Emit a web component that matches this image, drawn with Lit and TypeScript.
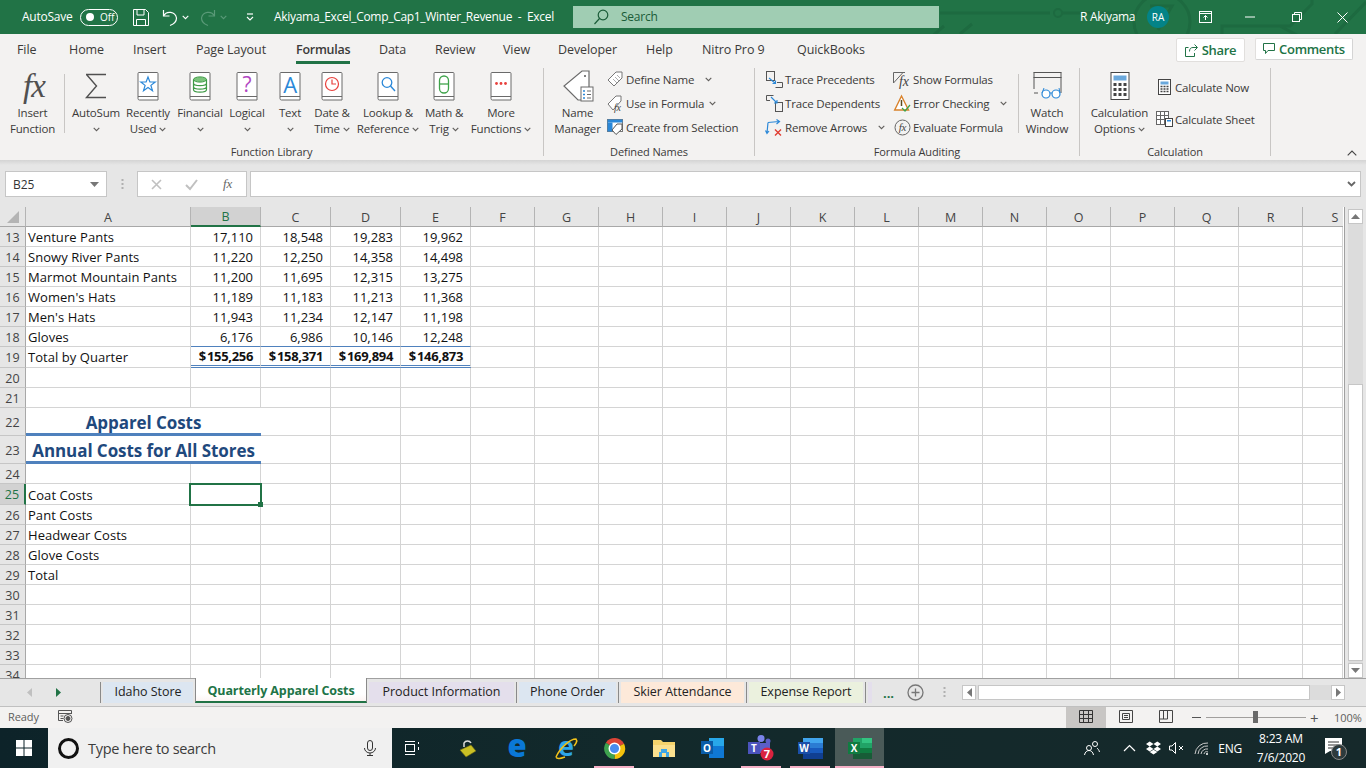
import { LitElement, html, css, svg } from "lit";
import { customElement } from "lit/decorators.js";

const chev = (c = "#605e5c") => html`<svg class="chev" width="7" height="5" viewBox="0 0 7 5"><path d="M.7 .8L3.5 3.6L6.3 .8" fill="none" stroke="${c}" stroke-width="1.1"/></svg>`;

const book = (inner: any) => html`<svg width="22" height="29" viewBox="0 0 22 29">
  <path d="M2 .5H20a1 1 0 0 1 1 1V28H2.5A1.5 1.5 0 0 1 1 26.5V1.5a1 1 0 0 1 1-1Z" fill="#fff" stroke="#6a6a6a"/>
  <path d="M1 24.5H21" stroke="#6a6a6a"/>${inner}</svg>`;

const I: Record<string, any> = {
  fx: html`<span class="fxbig">fx</span>`,
  sum: html`<svg width="22" height="26" viewBox="0 0 22 26"><path d="M1 1.5H21M1.5 1.5L11.5 13L1.5 24.5H21" fill="none" stroke="#505050" stroke-width="1.4"/></svg>`,
  star: book(svg`<path d="M11 5l1.9 5h5.3l-4.3 3.4 1.6 5.3L11 15.6l-4.5 3.1 1.6-5.3L3.8 10h5.3Z" fill="none" stroke="#2b88d8" stroke-width="1.2"/>`),
  fin: book(svg`<ellipse cx="11" cy="7.5" rx="6.5" ry="2.6" fill="#7cc47c" stroke="#3e9a46"/><path d="M4.5 7.5v10c0 1.5 3 2.6 6.5 2.6s6.5-1.1 6.5-2.6v-10M4.5 11c0 1.5 3 2.6 6.5 2.6s6.5-1.1 6.5-2.6M4.5 14.5c0 1.5 3 2.6 6.5 2.6s6.5-1.1 6.5-2.6" fill="none" stroke="#3e9a46" stroke-width="1.2"/>`),
  log: book(svg`<text x="11" y="20" font-family="Open Sans" font-size="21" fill="#b146c2" text-anchor="middle">?</text>`),
  txt: book(svg`<text x="11" y="21" font-family="Open Sans" font-size="22" fill="#2b88d8" text-anchor="middle">A</text>`),
  clk: book(svg`<circle cx="11" cy="12" r="6.5" fill="none" stroke="#e8403c" stroke-width="1.2"/><path d="M11 7.5V12H15" fill="none" stroke="#e8403c" stroke-width="1.2"/>`),
  lku: book(svg`<circle cx="10" cy="10.5" r="4.8" fill="none" stroke="#2b88d8" stroke-width="1.3"/><path d="M13.5 14l4.5 5" stroke="#2b88d8" stroke-width="1.4"/>`),
  math: book(svg`<rect x="6.5" y="4" width="9" height="17" rx="4.5" fill="none" stroke="#3ea34a" stroke-width="1.3"/><path d="M6.5 12H15.5" stroke="#3ea34a" stroke-width="1.3"/>`),
  more: book(svg`<circle cx="6.5" cy="11.5" r="1.4" fill="#e8403c"/><circle cx="11" cy="11.5" r="1.4" fill="#e8403c"/><circle cx="15.5" cy="11.5" r="1.4" fill="#e8403c"/>`),
  name: html`<svg width="32" height="32" viewBox="0 0 32 32"><path d="M20 1H27V23L19 30H16L2 16Z" fill="#fff" stroke="#6a6a6a" stroke-width="1.2"/><circle cx="23" cy="6" r="1" fill="#555"/><rect x="19" y="17" width="12" height="14" fill="#fff" stroke="#6a6a6a"/><path d="M21 21h2M21 24.5h2M21 28h2" stroke="#2b88d8" stroke-width="1.6"/><path d="M25 21h4M25 24.5h4M25 28h4" stroke="#6a6a6a"/></svg>`,
  def: html`<svg width="16" height="16" viewBox="0 0 16 16"><path d="M9 1H15V7L7 15L1 9Z" fill="#fff" stroke="#777"/><path d="M6 8l4 4M8 6l4 4M10 4l3 3" stroke="#999" stroke-width=".8"/></svg>`,
  use: html`<svg width="17" height="17" viewBox="0 0 17 17"><path d="M9 1H14V6L6 15L1 9Z" fill="#fff" stroke="#777"/><text x="7" y="16" font-family="Liberation Serif" font-style="italic" font-size="10" fill="#444">fx</text></svg>`,
  cre: html`<svg width="17" height="16" viewBox="0 0 17 16"><rect x=".5" y=".5" width="15" height="12" fill="#fff" stroke="#777"/><rect x=".5" y=".5" width="15" height="3" fill="#2b88d8"/><rect x=".5" y="3.5" width="5" height="9" fill="#2b88d8"/><path d="M10 5H15V10L9 15.5L5 11Z" fill="#fff" stroke="#555"/></svg>`,
  prec: html`<svg width="17" height="17" viewBox="0 0 17 17"><rect x=".5" y=".5" width="8" height="9" fill="none" stroke="#555"/><path d="M11 11.500H16.500V16.500H9.500" fill="none" stroke="#555"/><path d="M3 7L9.500 12.500M9.500 9.500V12.500H6.500" fill="none" stroke="#2b88d8" stroke-width="1.100"/></svg>`,
  dep: html`<svg width="17" height="17" viewBox="0 0 17 17"><path d="M7.500 .5H.5V5.500H4" fill="none" stroke="#555"/><rect x="9.500" y="7.500" width="7" height="9" fill="none" stroke="#555"/><path d="M5 2L11 8M11 5V8H8" fill="none" stroke="#2b88d8" stroke-width="1.100"/></svg>`,
  rem: html`<svg width="18" height="17" viewBox="0 0 18 17"><path d="M3 3.500L2 14M.5 11.500L2 14.500L4 12M3 3.500L14 2.500M11.500 .5L14.500 2.500L11.500 5" fill="none" stroke="#2b88d8" stroke-width="1.200"/><path d="M10 10.500L16 16.500M16 10.500L10 16.500" stroke="#e03c31" stroke-width="1.400"/></svg>`,
  show: html`<svg width="18" height="17" viewBox="0 0 18 17"><path d="M.5 1.500H12M.5 1.500V12M.5 12L10 1.500" fill="none" stroke="#666"/><text x="6" y="15" font-family="Liberation Serif" font-style="italic" font-size="14" fill="#444">fx</text></svg>`,
  err: html`<svg width="17" height="17" viewBox="0 0 17 17"><path d="M7.500 1L14.500 15H.7Z" fill="#fff" stroke="#d9822b" stroke-width="1.400"/><path d="M7.500 5V11" stroke="#5a4a20" stroke-width="1.500"/><path d="M8 13l3 3l5-6" fill="none" stroke="#3ea34a" stroke-width="1.200"/></svg>`,
  evl: html`<svg width="17" height="17" viewBox="0 0 17 17"><circle cx="8.5" cy="8.5" r="7.5" fill="none" stroke="#666"/><text x="8.5" y="12" text-anchor="middle" font-family="Liberation Serif" font-style="italic" font-size="11" fill="#444">fx</text></svg>`,
  watch: html`<svg width="31" height="28" viewBox="0 0 31 28"><path d="M2 17V.5H29V21M1.500 5.500H29.500M2 21h4" fill="none" stroke="#555"/><path d="M1.500 .5H29.500" stroke="#555"/><circle cx="14" cy="22" r="4" fill="#fff" stroke="#2b88d8" stroke-width="1.2"/><circle cx="24" cy="22" r="4" fill="#fff" stroke="#2b88d8" stroke-width="1.2"/><path d="M18 21h2M10 21l2-5M28 21l-1-5" fill="none" stroke="#2b88d8"/></svg>`,
  calc: html`<svg width="20" height="28" viewBox="0 0 20 28"><rect x="1" y=".5" width="18" height="27" fill="#fff" stroke="#444"/><rect x="3.500" y="3.500" width="13" height="5" fill="#6aa8dc"/><g fill="#444"><rect x="3.500" y="11" width="3" height="3"/><rect x="8.500" y="11" width="3" height="3"/><rect x="13.500" y="11" width="3" height="3"/><rect x="3.500" y="16" width="3" height="3"/><rect x="8.500" y="16" width="3" height="3"/><rect x="13.500" y="16" width="3" height="3"/><rect x="3.500" y="21" width="3" height="3"/><rect x="8.500" y="21" width="3" height="3"/><rect x="13.500" y="21" width="3" height="3"/></g></svg>`,
  now: html`<svg width="13" height="16" viewBox="0 0 13 16"><rect x=".5" y=".5" width="12" height="15" fill="#fff" stroke="#444"/><rect x="2.500" y="2.500" width="8" height="3" fill="#6aa8dc"/><path d="M2.500 7.500h2M5.500 7.500h2M8.500 7.500h2M2.500 10h2M5.500 10h2M8.500 10h2M2.500 12.500h2M5.500 12.500h2M8.500 12.500h2" stroke="#444" stroke-width="1.4"/></svg>`,
  sheet: html`<svg width="17" height="16" viewBox="0 0 17 16"><rect x=".5" y=".5" width="12" height="13" fill="#fff" stroke="#666"/><path d="M.5 4.500H12.500M.5 8.500H12.500M4.500 .5V13.500M8.500 .5V13.500" stroke="#666"/><rect x="9.500" y="7.500" width="7" height="8" fill="#fff" stroke="#444"/><rect x="11" y="9" width="4" height="1.500" fill="#2b88d8"/></svg>`,
};

const bigs1 = [
  { i: "fx", a: "Insert", b: "Function", w: 65, sep: true },
  { i: "sum", a: "AutoSum", b: chev(), w: 62 },
  { i: "star", a: "Recently", b: html`Used ${chev()}`, w: 42 },
  { i: "fin", a: "Financial", b: chev(), w: 62 },
  { i: "log", a: "Logical", b: chev(), w: 32 },
  { i: "txt", a: "Text", b: chev(), w: 54 },
  { i: "clk", a: "Date &", b: html`Time ${chev()}`, w: 30 },
  { i: "lku", a: "Lookup &", b: html`Reference ${chev()}`, w: 82 },
  { i: "math", a: "Math &", b: html`Trig ${chev()}`, w: 30 },
  { i: "more", a: "More", b: html`Functions ${chev()}`, w: 84 },
];

const ribbonTabs = [
  ["File", 52], ["Home", 64], ["Insert", 63], ["Page Layout", 100], ["Formulas", 83], ["Data", 56],
  ["Review", 68], ["View", 55], ["Developer", 88], ["Help", 56], ["Nitro Pro 9", 95], ["QuickBooks", 80],
] as [string, number][];

const colLetters = "ABCDEFGHIJKLMNOPQRS".split("");

type RowData = { n: number; a?: string; v?: string[]; total?: boolean; under?: boolean };
const rows: RowData[] = [
  { n: 13, a: "Venture Pants", v: ["17,110", "18,548", "19,283", "19,962"] },
  { n: 14, a: "Snowy River Pants", v: ["11,220", "12,250", "14,358", "14,498"] },
  { n: 15, a: "Marmot Mountain Pants", v: ["11,200", "11,695", "12,315", "13,275"] },
  { n: 16, a: "Women's Hats", v: ["11,189", "11,183", "11,213", "11,368"] },
  { n: 17, a: "Men's Hats", v: ["11,943", "11,234", "12,147", "11,198"] },
  { n: 18, a: "Gloves", v: ["6,176", "6,986", "10,146", "12,248"], under: true },
  { n: 19, a: "Total by Quarter", v: ["$\u200a155,256", "$\u200a158,371", "$\u200a169,894", "$\u200a146,873"], total: true },
  { n: 20 }, { n: 21 }, { n: 22 }, { n: 23 }, { n: 24 },
  { n: 25, a: "Coat Costs" }, { n: 26, a: "Pant Costs" }, { n: 27, a: "Headwear Costs" },
  { n: 28, a: "Glove Costs" }, { n: 29, a: "Total" },
  { n: 30 }, { n: 31 }, { n: 32 }, { n: 33 }, { n: 34 },
];

const sheetTabs = [
  { t: "Idaho Store", w: 95, c: "#dce6f1" },
  { t: "Quarterly Apparel Costs", w: 172, active: true },
  { t: "Product Information", w: 149, c: "#e4dfec", sep: true },
  { t: "Phone Order", w: 102, c: "#dce6f1", sep: true },
  { t: "Skier Attendance", w: 128, c: "#fde9d9", sep: true },
  { t: "Expense Report", w: 119, c: "#ebf1de", sep: true },
  { t: "", w: 9, c: "#e4dfec" },
];

@customElement("app-root")
export class AppRoot extends LitElement {
  static styles = css`
    :host { display: block; width: 1366px; height: 768px; overflow: hidden; font-family: "Open Sans", "Noto Sans", sans-serif; }
    .app { display: flex; flex-direction: column; width: 1366px; height: 768px; background: #f3f2f1; color: #3b3a39; }
    svg { display: block; flex: none; overflow: visible; }

    .title { position: relative; flex: none; height: 34px; background: #217346; display: flex; align-items: center; color: #fff; font-size: 12px; overflow: hidden; }
    .circuit { position: absolute; left: 940px; top: 0; }
    .title > *:not(.circuit) { position: relative; }
    .as { margin-left: 22px; letter-spacing: -.25px; width: 58px; margin-top: -1px; }
    .toggle { width: 38px; height: 17px; box-sizing: border-box; border: 1px solid #fff; border-radius: 9px; display: flex; align-items: center; gap: 6px; padding-left: 5px; font-size: 10px; }
    .toggle i { width: 8px; height: 8px; border-radius: 50%; background: #fff; }
    .q1 { margin-left: 15px; }
    .q2 { margin-left: 13px; }
    .q3 { margin-left: 4px; }
    .q4 { margin-left: 11px; }
    .q5 { margin-left: 4px; }
    .q6 { margin-left: 19px; }
    .doc { margin-left: 20px; width: 299px; white-space: pre; letter-spacing: -.3px; font-size: 12px; margin-top: -1px; }
    .search { width: 366px; height: 22px; background: #a0cdb3; display: flex; align-items: center; color: #1a5c38; box-sizing: border-box; padding: 0 0 1px 20px; gap: 12px; letter-spacing: -.25px; }
    .user { margin-left: 141px; width: 67px; letter-spacing: -.3px; margin-top: -1px; }
    .ra { width: 22px; height: 22px; border-radius: 50%; background: #038387; display: flex; align-items: center; justify-content: center; font-size: 10px; }
    .w1 { margin-left: 30px; }
    .w2 { margin-left: 33px; }
    .w3 { margin-left: 37px; }
    .w4 { margin-left: 35px; }

    .tabs { flex: none; height: 32px; display: flex; align-items: stretch; padding-left: 17px; font-size: 12.500px; position: relative; letter-spacing: -.08px; }
    .tab { display: flex; align-items: center; height: 29px; flex: none; box-sizing: border-box; padding-top: 2px; }
    .tab.on { font-weight: 600; color: #3b3a39; letter-spacing: -.25px; }
    .tab.on span { position: relative; }
    .tab.on span::after { content: ""; position: absolute; left: 0; right: 0; top: 20px; height: 2.500px; background: #217346; }
    .btns { margin-left: auto; display: flex; gap: 10px; padding: 4px 13px 0 0; }
    .bt { height: 22px; background: #fff; border: 1px solid #e1dfdd; border-radius: 2px; display: flex; align-items: center; justify-content: center; gap: 4px; color: #217346; font-size: 13px; font-weight: 600; letter-spacing: -.3px; }
    .bt.s { width: 67px; }
    .bt.c { width: 98px; }

    .ribbon { flex: none; height: 94px; padding-top: 2px; box-sizing: border-box; display: flex; font-size: 11.500px; letter-spacing: -.18px; position: relative; }
    .group { height: 88px; border-right: 1px solid #c8c6c4; box-sizing: border-box; display: flex; flex-direction: column; flex: none; }
    .g1 { width: 544px; } .g2 { width: 211px; } .g3 { width: 325px; } .g4 { width: 191px; }
    .gc { height: 76px; display: flex; flex: none; }
    .glab { height: 16px; line-height: 16px; text-align: center; flex: none; font-size: 11px; letter-spacing: -.1px; }
    .big { display: flex; flex-direction: column; align-items: center; flex: none; position: relative; white-space: nowrap; }
    .big .ic { height: 36px; display: flex; align-items: center; justify-content: center; }
    .big .l { height: 16px; line-height: 16px; display: flex; align-items: center; gap: 3px; }
    .big .ic + .l { margin-top: 1px; }
    .big.sep::after { content: ""; position: absolute; right: 0; top: 6px; height: 59px; width: 1px; background: #c8c6c4; }
    .fxbig { font-family: "Liberation Serif", serif; font-style: italic; font-size: 33px; color: #505050; letter-spacing: -1px; line-height: 30px; margin-left: 3px; }
    .col { display: flex; flex-direction: column; flex: none; margin-top: -1px; }
    .sm { height: 24px; display: flex; align-items: center; white-space: nowrap; }
    .sm .si { width: 20px; flex: none; display: flex; justify-content: center; padding-right: 2px; box-sizing: border-box; }
    .sm .chev { margin-left: 5px; }
    .sm .chev.far { margin-left: 11px; }
    .pl5 { margin-left: 5px; }
    .pl10 { margin-left: 10px; }
    .w128 { width: 128px; }
    .w125 { width: 125px; }
    .vsep { width: 1px; height: 59px; margin-top: 6px; background: #c8c6c4; flex: none; }
    .pl4 { margin-left: 4px; }
    .calc1 { height: 32px; }
    .calc1 .sm { height: 32px; }
    .rmid { padding-top: 4px; height: 72px; }
    .collapse { position: absolute; left: 1347px; top: 84px; }

    .shadow { flex: none; height: 5px; background: linear-gradient(#d4d4d4, #e6e6e6); }
    .fbar { flex: none; height: 42px; background: #e6e6e6; display: flex; box-sizing: border-box; padding: 6px 5px 0 5px; }
    .namebox, .fxbox, .finput { height: 26px; background: #fff; border: 1px solid #c6c6c6; box-sizing: border-box; display: flex; align-items: center; position: relative; }
    .namebox { width: 102px; padding: 0 7px; justify-content: space-between; font-size: 12px; color: #333; }
    .fdots { width: 30px; height: 26px; display: flex; justify-content: center; align-items: center; }
    .fxbox { width: 110px; }
    .fxbox svg { position: absolute; }
    .fxbox .x { left: 13px; } .fxbox .k { left: 47px; }
    .fxbox span { position: absolute; left: 85px; font: italic 13px "Liberation Serif", serif; color: #666; }
    .finput { margin-left: 3px; flex: 1; justify-content: flex-end; padding-right: 4px; }

    .main { flex: none; height: 471px; display: flex; background: #e6e6e6; }
    .sheet { position: relative; width: 1345px; flex: none; height: 471px; overflow: hidden; display: grid; background: #fff; box-sizing: border-box; border-right: 1px solid #a0a0a0;
      grid-template-columns: 26px 165px repeat(4, 70px) repeat(13, 64px) 40px;
      grid-template-rows: repeat(7, 20px) 21px 20px 20px 28px 28px 20px 21px repeat(8, 20px) 13px;
      font-size: 13px; color: #111; line-height: 19px; }
    .h, .rh { background: #e6e6e6; color: #444; display: flex; align-items: center; justify-content: center; box-sizing: border-box; font-size: 12.500px; border-right: 1px solid #b4b4b4; border-bottom: 1px solid #a8a8a8; overflow: hidden; padding-top: 1px; }
    .rh { border-bottom-color: #c6c6c6; border-right-color: #a8a8a8; }
    .h.sel { background: #d2d2d2; color: #217346; border-bottom: 2px solid #217346; }
    .rh.sel { background: #d2d2d2; color: #217346; border-right: 2px solid #217346; }
    .h.last { justify-content: flex-start; border-right: 0; }
    .h.last span { width: 64px; flex: none; text-align: center; }
    .rh.clip { align-items: flex-start; border-bottom: 0; }
    .c { box-sizing: border-box; border-right: 1px solid #d4d4d4; border-bottom: 1px solid #d4d4d4; display: flex; align-items: center; white-space: nowrap; min-width: 0; position: relative; }
    .c.clip { border-bottom: 0; }
    .c.lab { padding: 1px 0 0 2px; letter-spacing: .05px; }
    .c.lab.low { padding-top: 3px; }
    .c.num { justify-content: flex-end; padding: 1px 7px 0 0; }
    .c.under { border-bottom-color: #4f81bd; }
    .c.total { font-weight: 700; border-bottom: 3px double #4f81bd; padding-top: 1px; letter-spacing: -.32px; }
    .c.big-t { grid-column: span 2; justify-content: center; color: #1f497d; font-weight: 700; font-size: 17px; letter-spacing: -.07px; border-bottom: 3px solid #4f81bd; border-right: 0; padding-top: 4px; }
    .cursor { position: absolute; left: -2px; top: -1px; right: -2px; bottom: -2px; border: 2px solid #217346; pointer-events: none; z-index: 2; }
    .cursor i { position: absolute; right: -3px; bottom: -3px; width: 5px; height: 5px; background: #217346; }

    .vbar { flex: 1; display: flex; flex-direction: column; align-items: center; padding-top: 2px; box-sizing: border-box; }
    .vtrack { width: 15px; display: flex; flex-direction: column; height: 469px; background: #dcdcdc; }
    .sb { width: 15px; height: 15px; flex: none; background: #fff; border: 1px solid #c6c6c6; box-sizing: border-box; display: flex; align-items: center; justify-content: center; }
    .vgap { height: 160px; flex: none; }
    .vthumb { height: 277px; flex: none; background: #fff; border: 1px solid #c6c6c6; box-sizing: border-box; margin-bottom: 2px; }

    .stabs { flex: none; height: 29px; box-sizing: border-box; background: #e6e6e6; border-top: 1px solid #a0a0a0; border-bottom: 1px solid #c0c0c0; display: flex; font-size: 12.500px; color: #222; letter-spacing: -.03px; position: relative; }
    .nav { width: 100px; flex: none; box-sizing: border-box; display: flex; align-items: center; }
    .nav .a { margin-left: 27px; } .nav .b { margin-left: 24px; }
    .st { flex: none; box-sizing: border-box; height: 21px; margin-top: 3px; display: flex; align-items: center; justify-content: center; position: relative; border-left: 1px solid #8a8a8a; }
    .st.nosep { border-left: 0; }
    .st.on { height: 25px; margin-top: -1px; background: linear-gradient(#fff 70%, #fdf5f3); border-left: 1px solid #8a8a8a; border-right: 1px solid #8a8a8a; border-bottom: 2px solid #217346; color: #217346; font-weight: 700; letter-spacing: -.12px; z-index: 1; }
    .st b { position: absolute; left: 2px; right: 2px; top: 0; bottom: 0; display: flex; align-items: center; justify-content: center; font-weight: inherit; white-space: nowrap; padding-bottom: 2px; box-sizing: border-box; }
    .st.on b { top: 3px; bottom: -1px; }
    .dots3 { margin-left: 9px; width: 24px; color: #217346; font-weight: 700; font-size: 13px; display: flex; align-items: center; }
    .vd { margin-left: 19px; }
    .hs { display: flex; margin-left: 16px; align-items: center; height: 15px; align-self: center; background: #dcdcdc; width: 383px; }
    .hs .sb { width: 14px; }
    .hthumb { width: 332px; height: 15px; margin-left: 2px; background: #fff; border: 1px solid #c6c6c6; box-sizing: border-box; flex: none; }
    .hs .r { margin-left: auto; }
    .self { align-self: center; }

    .status { flex: none; height: 21px; display: flex; align-items: center; font-size: 11px; color: #605e5c; padding-left: 8px; }
    .ready { width: 50px; letter-spacing: -.1px; margin-top: -2px; }
    .status > svg { margin-top: -2px; }
    .vw { width: 40px; height: 21px; display: flex; align-items: center; justify-content: center; flex: none; }
    .vw svg { margin-top: -2px; }
    .vw.on { background: #c8c6c4; }
    .vw.first { margin-left: 993px; }
    .zm { width: 9px; height: 1px; background: #555; margin-left: 6px; flex: none; }
    .slider { width: 100px; height: 1px; background: #a19f9d; margin-left: 5px; position: relative; flex: none; }
    .slider i { position: absolute; left: 47px; top: -6px; width: 5px; height: 12px; background: #6a6a6a; }
    .zp { font-size: 15px; margin-left: 4px; width: 12px; color: #555; }
    .pct { margin-left: 12px; font-size: 11px; }

    .task { flex: none; height: 40px; background: linear-gradient(90deg, #0d2329, #12292b 45%, #16292b); display: flex; align-items: center; color: #fff; }
    .start { width: 48px; display: flex; justify-content: center; flex: none; }
    .tsearch { width: 344px; height: 40px; background: #f0f0f0; display: flex; align-items: center; color: #3c3c3c; font-size: 14.500px; letter-spacing: -.3px; box-sizing: border-box; padding-left: 10px; flex: none; }
    .ring { width: 21px; height: 21px; border-radius: 50%; box-sizing: border-box; border: 3.500px solid #111; margin-right: 9px; flex: none; }
    .mic { margin-left: 148px; }
    .ti { width: 49px; height: 40px; display: flex; align-items: center; justify-content: center; position: relative; flex: none; box-sizing: border-box; }
    .ti.m1 { margin-left: -5px; }
    .ti.m2 { margin-left: 7px; }
    .ti.pin::after { content: ""; position: absolute; left: 4px; right: 5px; bottom: 0; height: 2px; background: #f4b0c6; }
    .ti.act { background: #4a5a58; }
    .ti.act::after { left: 0; right: 0; }
    .tray { margin-left: auto; display: flex; align-items: center; font-size: 12px; height: 40px; }
    .eng { font-size: 12px; letter-spacing: -.2px; margin-left: 9px; }
    .clock { text-align: center; font-size: 12px; line-height: 19px; margin-left: 8px; width: 62px; letter-spacing: -.2px; }
    .note { margin-left: 12px; margin-right: 18px; }
    .tr1 { margin-right: 23px; } .tr2 { margin-right: 10px; } .tr3 { margin-right: 8px; } .tr3b { margin-right: 10px; }
  `;

  private cell(r: RowData, i: number) {
    const clip = r.n === 34 ? "clip" : "";
    if (r.v && i < 4) {
      return html`<div class="c num ${r.total ? "total" : ""} ${r.under ? "under" : ""}">${r.v[i]}</div>`;
    }
    if (r.n === 25 && i === 0) return html`<div class="c"><div class="cursor"><i></i></div></div>`;
    return html`<div class="c ${clip}"></div>`;
  }

  private sheetRow(r: RowData) {
    const clip = r.n === 34 ? "clip" : "";
    const rh = html`<div class="rh ${r.n === 25 ? "sel" : ""} ${clip}">${r.n}</div>`;
    const rest = Array.from({ length: 18 }, (_, i) => this.cell(r, i));
    if (r.n === 22 || r.n === 23) {
      return html`${rh}<div class="c big-t">${r.n === 22 ? "Apparel Costs" : "Annual Costs for All Stores"}</div>${rest.slice(1)}`;
    }
    return html`${rh}<div class="c lab ${clip} ${r.n === 25 ? "low" : ""}">${r.a ?? ""}</div>${rest}`;
  }

  private big(b: any) {
    return html`<div class="big ${b.sep ? "sep" : ""}" style="width:${b.w}px">
      <div class="ic">${I[b.i]}</div>
      <div class="l">${b.a}</div>
      <div class="l">${b.b}</div>
    </div>`;
  }

  private small(icon: string, label: string, c?: "near" | "far") {
    return html`<div class="sm"><span class="si">${I[icon]}</span>${label}${c ? html`<svg class="chev ${c}" width="7" height="5" viewBox="0 0 7 5"><path d="M.7 .8L3.500 3.600L6.300 .8" fill="none" stroke="#605e5c" stroke-width="1.100"/></svg>` : ""}</div>`;
  }

  private titleBar() {
    return html`<div class="title">
      <svg class="circuit" width="426" height="34" viewBox="0 0 426 34" fill="none" stroke="#1d6a40" stroke-width="3">
        <path d="M0 13H110"/><circle cx="118" cy="13" r="4" stroke-width="2"/><path d="M122 13H185"/>
        <circle cx="222" cy="22" r="28"/><path d="M210 6L232 6L218 30"/><path d="M282 40V26H350L372 4V-4M340 26L366 40M395 34L426 2"/>
        <path d="M-12 40L4 26M20 34l12-10"/>
      </svg>
      <div class="as">AutoSave</div>
      <div class="toggle"><i></i>Off</div>
      <svg class="q1" width="16" height="17" viewBox="0 0 16 17" fill="none" stroke="#fff" stroke-width="1"><path d="M.5 .5H12.500L15.500 3.500V16.500H.5Z"/><path d="M4 .5V6H11V.5M3.500 16.500V10.500H12.500V16.500"/></svg>
      <svg class="q2" width="16" height="17" viewBox="0 0 16 17" fill="none" stroke="#fff" stroke-width="1.200"><path d="M1.500 1V7H7.500"/><path d="M1.500 7A7 7 0 0 1 14.500 9C14.500 12 12 15 8 16.500"/></svg>
      <svg class="q3" width="7" height="5" viewBox="0 0 7 5"><path d="M.7 .8L3.500 3.600L6.300 .8" fill="none" stroke="#fff" stroke-width="1.100"/></svg>
      <svg class="q4" width="16" height="17" viewBox="0 0 16 17" fill="none" stroke="#5a9a78" stroke-width="1.200"><path d="M14.500 1V7H8.500"/><path d="M14.500 7A7 7 0 0 0 1.500 9C1.500 12 4 15 8 16.500"/></svg>
      <svg class="q5" width="7" height="5" viewBox="0 0 7 5"><path d="M.7 .8L3.500 3.600L6.300 .8" fill="none" stroke="#5a9a78" stroke-width="1.100"/></svg>
      <svg class="q6" width="8" height="8" viewBox="0 0 8 8" fill="none" stroke="#fff"><path d="M1 1H7" stroke-width="1.200"/><path d="M1 4L4 7L7 4" stroke-width="1.100"/></svg>
      <div class="doc">Akiyama_Excel_Comp_Cap1_Winter_Revenue  -  Excel</div>
      <div class="search">
        <svg width="16" height="16" viewBox="0 0 16 16" fill="none" stroke="#1a5c38" stroke-width="1.200"><circle cx="10" cy="6" r="4.800"/><path d="M6.500 9.500L1.500 15"/></svg>
        Search
      </div>
      <div class="user">R Akiyama</div>
      <div class="ra">RA</div>
      <svg class="w1" width="13" height="12" viewBox="0 0 13 12" fill="none" stroke="#fff"><rect x=".5" y=".5" width="12" height="11"/><path d="M.5 2.500H12.500M6.500 9V4.500M4.500 6.500L6.500 4.500L8.500 6.500"/></svg>
      <svg class="w2" width="10" height="2" viewBox="0 0 10 2"><path d="M0 1H10" stroke="#fff"/></svg>
      <svg class="w3" width="10" height="10" viewBox="0 0 10 10" fill="none" stroke="#fff"><rect x=".5" y="2.500" width="7" height="7"/><path d="M2.500 2.500V.5H9.500V7.500H7.500"/></svg>
      <svg class="w4" width="11" height="11" viewBox="0 0 11 11" fill="none" stroke="#fff"><path d="M.5 .5L10.500 10.500M10.500 .5L.5 10.500"/></svg>
    </div>`;
  }

  private ribbonTabs() {
    return html`<div class="tabs">
      ${ribbonTabs.map(([t, w]) => html`<div class="tab ${t === "Formulas" ? "on" : ""}" style="width:${w}px"><span>${t}</span></div>`)}
      <div class="btns">
        <div class="bt s"><svg width="13" height="13" viewBox="0 0 13 13" fill="none" stroke="#217346"><path d="M9.500 .5L12.500 3.500L9.500 6.500M12 3.500H8C5.500 3.500 4.500 5 4.500 7.500"/><path d="M3.500 3.500H.5V12.500H9.500V9"/></svg>Share</div>
        <div class="bt c"><svg width="12" height="12" viewBox="0 0 12 12" fill="none" stroke="#217346"><path d="M.5 .5H11.500V7.500H5L2.500 10.500V7.500H.5Z"/></svg>Comments</div>
      </div>
    </div>`;
  }

  private ribbon() {
    return html`<div class="ribbon">
      <div class="group g1"><div class="gc">${bigs1.map((b) => this.big(b))}</div><div class="glab">Function Library</div></div>
      <div class="group g2"><div class="gc">
        <div class="pl5">${this.big({ i: "name", a: "Name", b: "Manager", w: 57 })}</div>
        <div class="col">${this.small("def", "Define Name", "far")}${this.small("use", "Use in Formula", "near")}${this.small("cre", "Create from Selection")}</div>
      </div><div class="glab">Defined Names</div></div>
      <div class="group g3"><div class="gc">
        <div class="col pl10 w128">${this.small("prec", "Trace Precedents")}${this.small("dep", "Trace Dependents")}${this.small("rem", "Remove Arrows", "far")}</div>
        <div class="col w125">${this.small("show", "Show Formulas")}${this.small("err", "Error Checking", "far")}${this.small("evl", "Evaluate Formula")}</div>
        <div class="vsep"></div>
        ${this.big({ i: "watch", a: "Watch", b: "Window", w: 56 })}
      </div><div class="glab">Formula Auditing</div></div>
      <div class="group g4"><div class="gc">
        <div class="pl4">${this.big({ i: "calc", a: "Calculation", b: html`Options ${chev()}`, w: 71 })}</div>
        <div class="col rmid"><div class="calc1">${this.small("now", "Calculate Now")}</div><div class="calc1">${this.small("sheet", "Calculate Sheet")}</div></div>
      </div><div class="glab">Calculation</div></div>
      <svg class="collapse" width="10" height="6" viewBox="0 0 10 6"><path d="M.7 5.300L5 1L9.300 5.300" fill="none" stroke="#444" stroke-width="1.100"/></svg>
    </div>`;
  }

  private formulaBar() {
    return html`<div class="fbar">
      <div class="namebox">B25<svg width="9" height="5" viewBox="0 0 9 5"><path d="M0 0H9L4.500 5Z" fill="#777"/></svg></div>
      <div class="fdots"><svg width="3" height="11" viewBox="0 0 3 11" fill="#b0b0b0"><rect x=".5" y="0" width="2" height="2"/><rect x=".5" y="4" width="2" height="2"/><rect x=".5" y="8" width="2" height="2"/></svg></div>
      <div class="fxbox">
        <svg class="x" width="11" height="11" viewBox="0 0 11 11"><path d="M1 1L10 10M10 1L1 10" stroke="#c0c0c0" stroke-width="1.600"/></svg>
        <svg class="k" width="13" height="11" viewBox="0 0 13 11"><path d="M1 6L5 10L12 1" fill="none" stroke="#c0c0c0" stroke-width="2"/></svg>
        <span>fx</span>
      </div>
      <div class="finput"><svg width="9" height="6" viewBox="0 0 9 6"><path d="M1 1L4.500 4.500L8 1" fill="none" stroke="#666" stroke-width="1.800"/></svg></div>
    </div>`;
  }

  private sheet() {
    return html`<div class="sheet">
      <div class="h"><svg width="12" height="12" viewBox="0 0 12 12"><path d="M12 0V12H0Z" fill="#b4b4b4"/></svg></div>
      ${colLetters.map((l) => html`<div class="h ${l === "B" ? "sel" : ""} ${l === "S" ? "last" : ""}"><span>${l}</span></div>`)}
      ${rows.map((r) => this.sheetRow(r))}
    </div>`;
  }

  private sheetTabsBar() {
    return html`<div class="stabs">
      <div class="nav">
        <svg class="a" width="5" height="9" viewBox="0 0 5 9"><path d="M5 0V9L0 4.500Z" fill="#c0c0c0"/></svg>
        <svg class="b" width="5" height="9" viewBox="0 0 5 9"><path d="M0 0V9L5 4.500Z" fill="#217346"/></svg>
      </div>
      ${sheetTabs.map((t: any, i) => html`<div class="st ${t.active ? "on" : ""} ${i === 2 ? "nosep" : ""}" style="width:${t.w}px"><b style="${t.c ? `background:${t.c}` : ""}">${t.t}</b></div>`)}
      <div class="dots3">...</div>
      <svg class="self" width="17" height="17" viewBox="0 0 17 17" fill="none" stroke="#777" stroke-width="1.300"><circle cx="8.500" cy="8.500" r="7.500"/><path d="M4.500 8.500H12.500M8.500 4.500V12.500"/></svg>
      <svg class="vd self" width="3" height="11" viewBox="0 0 3 11" fill="#b0b0b0"><rect x=".5" y="0" width="2" height="2"/><rect x=".5" y="4" width="2" height="2"/><rect x=".5" y="8" width="2" height="2"/></svg>
      <div class="hs">
        <div class="sb"><svg width="5" height="9" viewBox="0 0 5 9"><path d="M5 0V9L0 4.500Z" fill="#777"/></svg></div>
        <div class="hthumb"></div>
        <div class="sb r"><svg width="5" height="9" viewBox="0 0 5 9"><path d="M0 0V9L5 4.500Z" fill="#777"/></svg></div>
      </div>
    </div>`;
  }

  private statusBar() {
    return html`<div class="status">
      <div class="ready">Ready</div>
      <svg width="15" height="13" viewBox="0 0 15 13" fill="none" stroke="#555"><path d="M.5 .5H13.500V4M.5 .5V10.500H5M.5 3.500H13.500M2.500 6h3M2.500 8.500h3"/><circle cx="10" cy="8.500" r="4"/><circle cx="10" cy="8.500" r="2" fill="#555"/></svg>
      <div class="vw on first"><svg width="14" height="13" viewBox="0 0 14 13" fill="none" stroke="#333"><path d="M.5 .5H13.500V12.500H.5ZM.5 4.500H13.500M.5 8.500H13.500M4.500 .5V12.500M9.500 .5V12.500"/></svg></div>
      <div class="vw"><svg width="14" height="13" viewBox="0 0 14 13" fill="none" stroke="#444"><path d="M.5 .5H13.500V12.500H.5ZM3.500 3.500H10.500V9.500H3.500ZM5 5.500H9M5 7.500H9"/></svg></div>
      <div class="vw"><svg width="14" height="13" viewBox="0 0 14 13" fill="none" stroke="#444"><path d="M.5 .5H13.500V12.500H.5ZM.5 9H8.500V.5M4.500 .5V9"/></svg></div>
      <div class="zm"></div>
      <div class="slider"><i></i></div>
      <div class="zp">+</div>
      <div class="pct">100%</div>
    </div>`;
  }

  private taskBar() {
    return html`<div class="task">
      <div class="start"><svg width="16" height="16" viewBox="0 0 16 16" fill="#fff"><rect width="7.500" height="7.500"/><rect x="8.500" width="7.500" height="7.500"/><rect y="8.500" width="7.500" height="7.500"/><rect x="8.500" y="8.500" width="7.500" height="7.500"/></svg></div>
      <div class="tsearch"><div class="ring"></div>Type here to search
        <svg class="mic" width="12" height="16" viewBox="0 0 12 16" fill="none" stroke="#333"><rect x="3.500" y=".5" width="5" height="10" rx="2.500"/><path d="M.5 8A5.500 5 0 0 0 11.500 8M6 13V15.500M3 15.500H9"/></svg>
      </div>
      <div class="ti m1"><svg width="16" height="15" viewBox="0 0 16 15" fill="none" stroke="#fff"><rect x="1.500" y="3.500" width="9" height="7"/><path d="M1 .5H11M1 13.500H11M14.500 1V3M14.500 6V9"/></svg></div>
      <div class="ti m2"><svg width="18" height="20" viewBox="0 0 18 20"><path d="M5 9V5a4 4 0 0 1 7 0" fill="none" stroke="#ddd" stroke-width="1.500"/><path d="M1 12L12 7L17 13L7 19Z" fill="#c9bf24" stroke="#6a6412" stroke-width=".6"/></svg></div>
      <div class="ti"><svg width="22" height="24" viewBox="0 0 22 24"><text x="11" y="21" text-anchor="middle" font-family="Open Sans" font-weight="800" font-size="31" fill="#0a78d7">e</text></svg></div>
      <div class="ti"><svg width="24" height="24" viewBox="0 0 24 24"><text x="12" y="20" text-anchor="middle" font-family="Open Sans" font-weight="700" font-size="27" fill="#2ea6e8">e</text><path d="M2 21C6 12 16 3 22 3C24 5 21 9 20 10M2 21C3 24 8 22 11 21" fill="none" stroke="#f2c21a" stroke-width="1.500"/></svg></div>
      <div class="ti pin"><svg width="23" height="23" viewBox="0 0 24 24"><path d="M12 12L3 6A11 11 0 0 1 22 7Z" fill="#db4437"/><path d="M12 12L22 7A11 11 0 0 1 12 23Z" fill="#f4c20d"/><path d="M12 12L12 23A11 11 0 0 1 3 6Z" fill="#3ea24e"/><circle cx="12" cy="12" r="5.500" fill="#4a8cf0" stroke="#fff" stroke-width="1.500"/></svg></div>
      <div class="ti"><svg width="22" height="19" viewBox="0 0 22 19"><path d="M0 1H8L10 3H22V18H0Z" fill="#f5d36c"/><path d="M0 6H22V18H0Z" fill="#fbe08e"/><path d="M6 18V13H8V10H14V13H16V18H13V14H9V18Z" fill="#3ea6e8"/></svg></div>
      <div class="ti"><svg width="24" height="22" viewBox="0 0 24 22"><rect x="8" y="1" width="15" height="12" fill="#28a8ea"/><path d="M8 9L23 9V21H8Z" fill="#0f78d4"/><rect x="0" y="4" width="12" height="13" fill="#0a5ca8"/><text x="6" y="14.500" text-anchor="middle" font-family="Open Sans" font-weight="700" font-size="10" fill="#fff">O</text></svg></div>
      <div class="ti pin"><svg width="27" height="26" viewBox="0 0 27 26"><circle cx="13" cy="3.500" r="3.500" fill="#7b83eb"/><circle cx="20" cy="6" r="2.500" fill="#5b5fc7"/><path d="M8 8H22V18H8Z" fill="#5b5fc7"/><rect x="0" y="7" width="12" height="12" fill="#4b53bc"/><text x="6" y="16.500" text-anchor="middle" font-family="Open Sans" font-weight="700" font-size="10" fill="#fff">T</text><circle cx="19" cy="19" r="6.500" fill="#d9233f"/><text x="19" y="23" text-anchor="middle" font-family="Open Sans" font-weight="700" font-size="11" fill="#fff">7</text></svg></div>
      <div class="ti pin"><svg width="25" height="21" viewBox="0 0 25 21"><rect x="5" y="0" width="20" height="21" fill="#2b7cd3"/><rect x="5" y="0" width="20" height="5" fill="#41a5ee"/><rect x="5" y="10" width="20" height="5" fill="#185abd"/><rect x="5" y="15" width="20" height="6" fill="#103f91"/><rect x="0" y="4" width="12" height="12" fill="#1a4fa8"/><text x="6" y="13.500" text-anchor="middle" font-family="Open Sans" font-weight="700" font-size="10" fill="#fff">W</text></svg></div>
      <div class="ti pin act"><svg width="24" height="21" viewBox="0 0 24 21"><rect x="5" y="0" width="19" height="21" fill="#21a366"/><rect x="14" y="0" width="10" height="5" fill="#33c481"/><rect x="5" y="10" width="19" height="5" fill="#107c41"/><rect x="5" y="15" width="19" height="6" fill="#185c37"/><rect x="0" y="4" width="12" height="12" fill="#107c41"/><text x="6" y="13.500" text-anchor="middle" font-family="Open Sans" font-weight="700" font-size="10" fill="#fff">X</text></svg></div>
      <div class="tray">
        <svg class="tr1" width="16" height="16" viewBox="0 0 16 16" fill="none" stroke="#fff"><circle cx="11" cy="4" r="2.500"/><circle cx="5" cy="8" r="2.500"/><path d="M.5 15C1 12 3 10.500 5 10.500S9 12 9.500 15M13 8C14 9 15 10 15.500 12"/></svg>
        <svg class="tr2" width="13" height="8" viewBox="0 0 13 8"><path d="M1 7L6.500 1.500L12 7" fill="none" stroke="#fff" stroke-width="1.200"/></svg>
        <svg class="tr3" width="15" height="14" viewBox="0 0 15 14" fill="#fff"><path d="M0 3L3.700 .5L7.500 3L3.700 5.500ZM7.500 3L11.300 .5L15 3L11.300 5.500ZM0 8L3.700 5.500L7.500 8L3.700 10.500ZM7.500 8L11.300 5.500L15 8L11.300 10.500ZM3.700 11L7.500 8.700L11.300 11L7.500 13.500Z"/></svg>
        <svg class="tr3b" width="15" height="12" viewBox="0 0 15 12" fill="none" stroke="#fff"><path d="M.5 4H3L6.500 .5V11.500L3 8H.5ZM10 4L14 8M14 4L10 8"/></svg>
        <svg width="15" height="13" viewBox="0 0 15 13" fill="none" stroke="#ccc"><path d="M1 12A12 12 0 0 1 14 1M4 12A9 9 0 0 1 14 4M7 12A6 6 0 0 1 14 7M10 12A3 3 0 0 1 14 10"/><circle cx="13" cy="12" r="1" fill="#fff" stroke="none"/></svg>
        <div class="eng">ENG</div>
        <div class="clock">8:23 AM<br />7/6/2020</div>
        <svg class="note" width="24" height="24" viewBox="0 0 24 24"><path d="M1 2H18V15H6L1 18Z" fill="#fff"/><path d="M4 6H15M4 9H15M4 12H11" stroke="#333"/><circle cx="15" cy="16" r="7.500" fill="#2d3a3c" stroke="#888"/><text x="15" y="20" text-anchor="middle" font-family="Open Sans" font-size="11" font-weight="700" fill="#fff">1</text></svg>
      </div>
    </div>`;
  }

  render() {
    return html`<div class="app">
      ${this.titleBar()}
      ${this.ribbonTabs()}
      ${this.ribbon()}
      <div class="shadow"></div>
      ${this.formulaBar()}
      <div class="main">
        ${this.sheet()}
        <div class="vbar"><div class="vtrack">
          <div class="sb"><svg width="9" height="5" viewBox="0 0 9 5"><path d="M0 5H9L4.500 0Z" fill="#777"/></svg></div>
          <div class="vgap"></div><div class="vthumb"></div>
          <div class="sb"><svg width="9" height="5" viewBox="0 0 9 5"><path d="M0 0H9L4.500 5Z" fill="#777"/></svg></div>
        </div></div>
      </div>
      ${this.sheetTabsBar()}
      ${this.statusBar()}
      ${this.taskBar()}
    </div>`;
  }
}
